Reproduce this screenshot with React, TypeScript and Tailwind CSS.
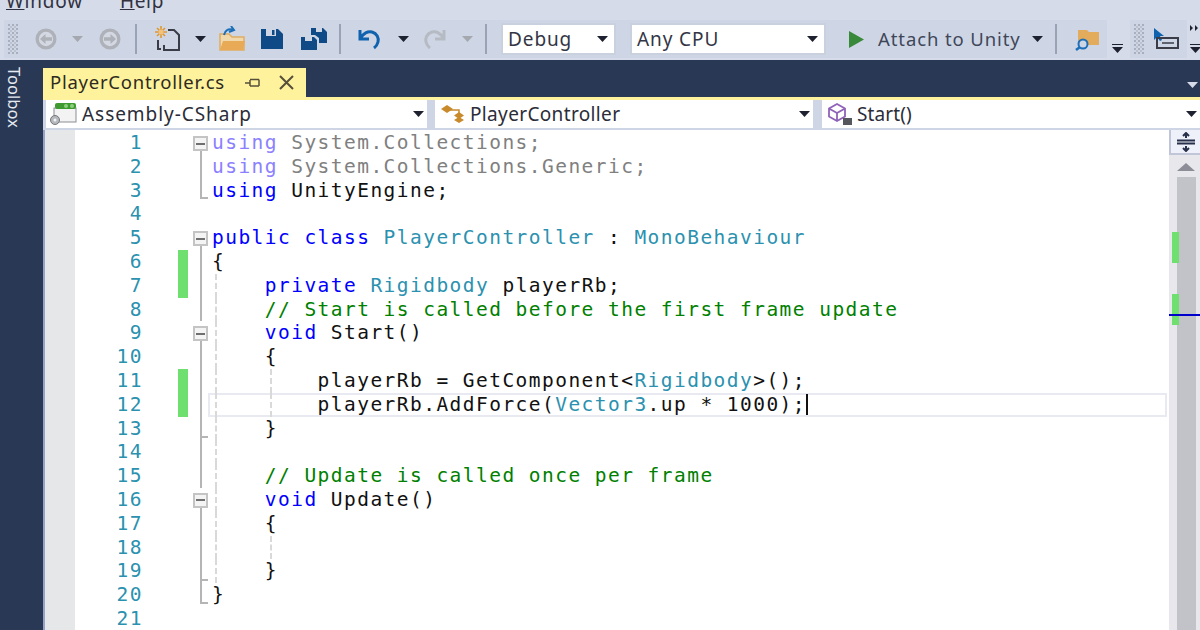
import type { ReactNode } from "react";

type Fold = "open" | "line" | "tick" | "end" | "none";
type Part = [string, string];

const KW = "text-[#0000ff]";
const DIM_KW = "text-[#8b80ff]";
const DIM = "text-[#808080]";
const TY = "text-[#2b91af]";
const CM = "text-[#008000]";
const TX = "text-[#111111]";

const rows: { code: Part[]; fold: Fold; changed?: boolean; guides?: number[] }[] = [
  { fold: "open", code: [[DIM_KW, "using"], [DIM, " System.Collections;"]] },
  { fold: "line", code: [[DIM_KW, "using"], [DIM, " System.Collections.Generic;"]] },
  { fold: "end", code: [[KW, "using"], [TX, " UnityEngine;"]] },
  { fold: "none", code: [] },
  { fold: "open", code: [[KW, "public class "], [TY, "PlayerController"], [TX, " : "], [TY, "MonoBehaviour"]] },
  { fold: "line", changed: true, code: [[TX, "{"]] },
  { fold: "line", changed: true, guides: [0], code: [[TX, "    "], [KW, "private "], [TY, "Rigidbody"], [TX, " playerRb;"]] },
  { fold: "line", guides: [0], code: [[CM, "    // Start is called before the first frame update"]] },
  { fold: "open", guides: [0], code: [[TX, "    "], [KW, "void "], [TX, "Start()"]] },
  { fold: "line", guides: [0], code: [[TX, "    {"]] },
  { fold: "line", changed: true, guides: [0, 1], code: [[TX, "        playerRb = GetComponent<"], [TY, "Rigidbody"], [TX, ">();"]] },
  { fold: "line", changed: true, guides: [0, 1], code: [[TX, "        playerRb.AddForce("], [TY, "Vector3"], [TX, ".up * 1000);"]] },
  { fold: "tick", guides: [0], code: [[TX, "    }"]] },
  { fold: "line", guides: [0], code: [] },
  { fold: "line", guides: [0], code: [[CM, "    // Update is called once per frame"]] },
  { fold: "open", guides: [0], code: [[TX, "    "], [KW, "void "], [TX, "Update()"]] },
  { fold: "line", guides: [0], code: [[TX, "    {"]] },
  { fold: "line", guides: [0, 1], code: [] },
  { fold: "tick", guides: [0], code: [[TX, "    }"]] },
  { fold: "end", code: [[TX, "}"]] },
  { fold: "none", code: [] },
];

function Caret({ className = "" }: { className?: string }) {
  return (
    <svg width="11" height="6" viewBox="0 0 11 6" className={`shrink-0 ${className}`}>
      <path d="M0 0h11L5.5 6z" fill="currentColor" />
    </svg>
  );
}

function Sep({ className = "" }: { className?: string }) {
  return <div className={`h-[30px] w-[2px] shrink-0 bg-[#9aa3b4] ${className}`} />;
}

function Grip({ id }: { id: string }) {
  return (
    <svg width="10" height="30" viewBox="0 0 10 30" className="shrink-0">
      <defs>
        <pattern id={id} width="4" height="4" patternUnits="userSpaceOnUse">
          <rect width="2" height="2" fill="#a9afbc" />
          <rect x="2" y="2" width="2" height="2" fill="#bcc2cd" />
        </pattern>
      </defs>
      <rect width="10" height="30" fill={`url(#${id})`} />
    </svg>
  );
}

function Nav({ dir, className = "" }: { dir: "l" | "r"; className?: string }) {
  return (
    <svg width="22" height="22" viewBox="0 0 22 22" className={`shrink-0 ${className}`}>
      <circle cx="11" cy="11" r="10.500" fill="#aeb1b8" />
      <circle cx="11" cy="11" r="7.200" fill="#d3d8e3" />
      {dir === "l" ? (
        <path d="M5 11l5.500-5v3.200H17v3.600h-6.500V16z" fill="#aeb1b8" />
      ) : (
        <path d="M17 11l-5.500-5v3.200H5v3.600h6.500V16z" fill="#aeb1b8" />
      )}
    </svg>
  );
}

function Combo({ label, className }: { label: string; className: string }) {
  return (
    <div className={`flex h-[32px] shrink-0 items-center justify-between border-2 border-[#c9d0de] bg-white pl-[5px] pr-[6px] ${className}`}>
      <span className="text-[19px] tracking-[0.9px] text-[#333645]">{label}</span>
      <Caret className="text-[#1e2230]" />
    </div>
  );
}

function NavCombo({ icon, label, className, textClass }: { icon: ReactNode; label: string; className: string; textClass: string }) {
  return (
    <div className={`flex h-[28px] shrink-0 items-center bg-white ${className}`}>
      <div className="flex w-[35px] shrink-0 justify-center">{icon}</div>
      <span className={`flex-1 text-[19px] leading-none text-[#2b2d38] ${textClass}`}>{label}</span>
      <Caret className="mr-[3px] text-[#1e2230]" />
    </div>
  );
}

function FoldCell({ fold }: { fold: Fold }) {
  if (fold === "none") return <div className="w-[16px] shrink-0" />;
  const lineClass = fold === "end" ? "bottom-[3px] top-0" : fold === "open" ? "bottom-0 top-[6px]" : "bottom-0 top-0";
  return (
    <div className="relative h-full w-[16px] shrink-0">
      <div className={`absolute left-[8px] w-[2px] bg-[#b5b5b5] ${lineClass}`} />
      {fold === "end" && <div className="absolute bottom-[3px] left-[8px] h-[2px] w-[8px] bg-[#b5b5b5]" />}
      {fold === "tick" && <div className="absolute bottom-[2px] left-[8px] h-[2px] w-[8px] bg-[#b5b5b5]" />}
      {fold === "open" && (
        <div className="absolute left-[1px] top-[5px] flex h-[15px] w-[15px] items-center justify-center border-2 border-[#c4c4c4] bg-[#f4f4f4]">
          <div className="h-[2px] w-[9px] bg-[#6f6f6f]" />
        </div>
      )}
    </div>
  );
}

function CodeRow({ n, row }: { n: number; row: (typeof rows)[number] }) {
  return (
    <div className="relative flex h-[23.8px] items-stretch">
      {n === 12 && <div className="absolute bottom-0 left-[133px] right-[2px] top-0 border-2 border-[#e9e9f2]" />}
      <div className="w-[68px] shrink-0 text-right text-[#2b91af]">{n}</div>
      <div className="ml-[35px] w-[10px] shrink-0">
        {row.changed && <div className="h-full w-full bg-[#6fe06f]" />}
      </div>
      <div className="ml-[4px]">
        <FoldCell fold={row.fold} />
      </div>
      <div className="relative ml-[4px] whitespace-pre">
        {row.code.map(([cls, text], i) => (
          <span key={i} className={cls}>
            {text}
          </span>
        ))}
        {n === 12 && <div className="absolute -right-[2px] top-[1px] h-[21px] w-[2px] bg-[#111111]" />}
      </div>
      {row.guides?.includes(0) && (
        <div className="absolute bottom-0 left-[140px] top-0 border-l-2 border-dashed border-[#d9d9d9]" />
      )}
      {row.guides?.includes(1) && (
        <div className="absolute bottom-0 left-[195px] top-0 border-l-2 border-dashed border-[#d9d9d9]" />
      )}
    </div>
  );
}

export default function App() {
  return (
    <div className="flex h-[630px] w-[1200px] flex-col overflow-hidden bg-[#d6dbe9] font-['Noto_Sans',sans-serif]">
      {/* menu strip, cropped at the top of the shot */}
      <div className="flex h-[20px] shrink-0 items-end overflow-hidden pl-[6px] text-[19px] leading-[28px] text-[#303240]">
        <span className="mb-[5px] tracking-[0.8px]"><span className="underline">W</span>indow</span>
        <span className="mb-[5px] ml-[37px] tracking-[0.7px]"><span className="underline">H</span>elp</span>
      </div>

      {/* toolbars */}
      <div className="flex h-[38px] shrink-0 items-stretch overflow-hidden pl-[4px]">
        <div className="flex items-center bg-[#ced6e6] pl-[4px] pr-[6px]">
          <Grip id="gripa" />
          <Nav dir="l" className="ml-[17px]" />
          <Caret className="ml-[14.5px] text-[#a5a8ae]" />
          <Nav dir="r" className="ml-[16.5px]" />
          <Sep className="ml-[14px]" />
          <svg width="26" height="26" viewBox="0 0 26 26" className="ml-[18px] shrink-0">
            <path d="M6 0v12M0 6h12M2 2l8 8M10 2l-8 8" stroke="#e0982f" strokeWidth="1.600" />
            <circle cx="6" cy="6" r="2.500" fill="#f2c27a" />
            <path d="M13 4h6l5 5v15H9v-5" fill="none" stroke="#3a3d48" strokeWidth="2" />
            <path d="M3 14v9h3" fill="none" stroke="#3a3d48" strokeWidth="2" />
          </svg>
          <Caret className="ml-[13.5px] text-[#1e2230]" />
          <svg width="28" height="26" viewBox="0 0 28 26" className="ml-[12.5px] shrink-0">
            <path d="M2 11V8h9l3 3h12v13H2z" fill="#f1d9ae" stroke="#e0ad62" strokeWidth="1.500" />
            <path d="M2 24l3-9h22l-2 9z" fill="#e8aa57" />
            <path d="M6 9c1-5 5-7 9-5M13 0l3 4-5 2" fill="none" stroke="#1d6fb8" strokeWidth="2" />
          </svg>
          <svg width="24" height="22" viewBox="0 0 24 22" className="ml-[14px] shrink-0">
            <path d="M1 1h17l5 5v15H1z" fill="#0f4a86" />
            <rect x="6" y="1" width="10" height="7" fill="#ced6e6" />
            <rect x="12" y="2" width="2.500" height="5" fill="#0f4a86" />
          </svg>
          <svg width="28" height="24" viewBox="0 0 28 24" className="ml-[16px] shrink-0">
            <path d="M1 10h13l3 3v10H1z" fill="#0f4a86" />
            <rect x="5" y="10" width="7" height="4" fill="#ced6e6" />
            <path d="M11 1h12l4 4v11H19v-5l-4-3h-4z" fill="#0f4a86" />
            <rect x="16" y="1" width="6" height="4" fill="#ced6e6" />
          </svg>
          <Sep className="ml-[11px]" />
          <svg width="26" height="22" viewBox="0 0 26 22" className="ml-[16px] shrink-0">
            <path d="M3 2v9h9M3.500 10.500C6 5 11 3 15 4c5 1.500 7 6 6 10-.6 2.500-2 4.500-4 6" fill="none" stroke="#0f62ad" strokeWidth="3" />
          </svg>
          <Caret className="ml-[14.5px] text-[#1e2230]" />
          <svg width="26" height="22" viewBox="0 0 26 22" className="ml-[12.5px] shrink-0">
            <path d="M23 2v9h-9M22.500 10.500C20 5 15 3 11 4 6 5.500 4 10 5 14c.6 2.500 2 4.500 4 6" fill="none" stroke="#b6bac2" strokeWidth="3" />
          </svg>
          <Caret className="ml-[14.5px] text-[#a5a8ae]" />
          <Sep className="ml-[12.5px]" />
          <Combo label="Debug" className="ml-[14px] w-[115px]" />
          <Combo label="Any CPU" className="ml-[14px] w-[196px]" />
          <svg width="16" height="17" viewBox="0 0 16 17" className="ml-[22px] shrink-0">
            <path d="M1 0l15 8.500L1 17z" fill="#38893a" />
          </svg>
          <span className="ml-[14px] whitespace-nowrap text-[18.5px] tracking-[0.9px] text-[#3f4658]">Attach to Unity</span>
          <Caret className="ml-[11.5px] text-[#1e2230]" />
          <Sep className="ml-[11.5px]" />
          <svg width="26" height="24" viewBox="0 0 26 24" className="ml-[18px] shrink-0">
            <path d="M3 3h9l2 2h10v13H3z" fill="#e3ac5c" />
            <circle cx="8" cy="17" r="4.500" fill="#ced6e6" stroke="#1d6fb8" strokeWidth="2" />
            <path d="M5 20l-4 3" stroke="#1d6fb8" strokeWidth="2.500" />
          </svg>
        </div>
        <div className="ml-[5.5px] flex flex-col justify-end gap-[2px] pb-[5px]">
          <div className="h-[1px] w-[11px] bg-[#1e2230]" />
          <Caret className="text-[#1e2230]" />
        </div>
        <div className="ml-[6.5px] flex items-center bg-[#ced6e6] pl-[4px] pr-[8px]">
          <Grip id="gripb" />
          <svg width="26" height="22" viewBox="0 0 26 22" className="ml-[9px] shrink-0">
            <path d="M1 0v12l3-3 3 4 2-1-2-4h4z" fill="#0f62ad" />
            <rect x="4" y="10" width="21" height="10" fill="none" stroke="#3a3d48" strokeWidth="2" />
            <path d="M9 15h12" stroke="#3a3d48" strokeWidth="1.500" />
          </svg>
        </div>
        <div className="ml-[3px] flex flex-col justify-between pb-[5px] pt-[5px]">
          <svg width="11" height="6" viewBox="0 0 11 6" className="shrink-0">
            <path d="M0 0l3 3-3 3zM5 0l3 3-3 3z" fill="#1e2230" />
          </svg>
          <div className="flex flex-col gap-[2px]">
            <div className="h-[1px] w-[11px] bg-[#1e2230]" />
            <Caret className="text-[#1e2230]" />
          </div>
        </div>
      </div>

      <div className="h-[2px] shrink-0 bg-[#d6dbe9]" />

      {/* dark shell */}
      <div className="flex min-h-0 flex-1 bg-[#293955]">
        <div className="w-[43px] shrink-0 pt-[7px]">
          <div className="ml-[4px] text-[16.5px] leading-[20px] text-[#e6e9f0] [writing-mode:vertical-rl]">Toolbox</div>
        </div>

        <div className="flex min-w-0 flex-1 flex-col">
          <div className="flex h-[37px] shrink-0 items-end justify-between pt-[8px]">
            <div className="flex h-[29px] w-[263px] items-center bg-[#fff29d] pl-[7px] text-[#2d2a20]">
              <span className="text-[18.5px] leading-none tracking-[0.75px]">PlayerController.cs</span>
              <svg width="16" height="12" viewBox="0 0 16 12" className="ml-[20px] shrink-0">
                <path d="M0 6h5M5 3v6M5 2.500h9M5 9h9M14 2.500v6.500" fill="none" stroke="#55503a" strokeWidth="1.500" />
              </svg>
              <svg width="17" height="17" viewBox="0 0 17 17" className="ml-[17px] shrink-0">
                <path d="M2 2l13 13M15 2L2 15" stroke="#55503a" strokeWidth="2" />
              </svg>
            </div>
            <Caret className="mb-[9px] mr-[1px] w-[13px] text-[#d6dbe9]" />
          </div>
          <div className="h-[3px] shrink-0 bg-[#fff29d]" />

          {/* navigation bar */}
          <div className="flex h-[30px] shrink-0 items-start bg-[#ced6e6] pl-[3px]">
            <NavCombo
              className="w-[381px]"
              textClass="ml-[1px] tracking-[0.95px]"
              label="Assembly-CSharp"
              icon={
                <svg width="29" height="24" viewBox="0 0 29 24">
                  <rect x="5" y="6" width="22" height="14" fill="#f3f3f3" stroke="#8a8d94" />
                  <rect x="6" y="1" width="21" height="6" rx="2" fill="#3f9a32" />
                  <circle cx="17" cy="4" r="2" fill="#8fd07f" />
                  <circle cx="23" cy="4" r="2" fill="#8fd07f" />
                  <circle cx="6" cy="18" r="4.500" fill="#b5b8bd" stroke="#74777d" />
                  <circle cx="6" cy="18" r="1.500" fill="#f3f3f3" />
                </svg>
              }
            />
            <NavCombo
              className="ml-[8px] w-[378px]"
              textClass="tracking-[0.35px]"
              label="PlayerController"
              icon={
                <svg width="24" height="20" viewBox="0 0 24 20">
                  <path d="M6 1l6 4-6 4-6-4zM18 8l5 3.500-5 3.500-5-3.500zM18 13l5 3-5 3-5-3z" fill="#c98a2c" />
                  <path d="M9 6h9v4" fill="none" stroke="#c98a2c" strokeWidth="1.500" />
                </svg>
              }
            />
            <NavCombo
              className="ml-[9px] flex-1"
              textClass="tracking-[0.1px]"
              label="Start()"
              icon={
                <svg width="28" height="24" viewBox="0 0 28 24">
                  <path d="M11 2l8 4.500v8L11 19l-8-4.500v-8zM3 6.500l8 4.500 8-4.500M11 11v8" fill="none" stroke="#8f62b8" strokeWidth="1.800" />
                  <rect x="17" y="16" width="9" height="7" fill="#55575d" />
                </svg>
              }
            />
          </div>

          {/* editor */}
          <div className="flex min-h-0 flex-1 border-l-2 border-[#98a2c4]">
            <div className="w-[30px] shrink-0 bg-[#e6e7e8]" />
            <div className="min-w-0 flex-1 overflow-hidden bg-white pt-[1px] font-['DejaVu_Sans_Mono',monospace] text-[19.5px] leading-[23.8px] tracking-[1.46px]">
              {rows.map((row, i) => (
                <CodeRow key={i} n={i + 1} row={row} />
              ))}
            </div>
            {/* vertical scrollbar */}
            <div className="relative flex w-[31px] shrink-0 flex-col bg-[#e8e8ec]">
              <div className="flex h-[25px] shrink-0 items-center justify-center border-b-2 border-l-2 border-[#c0c6d8] bg-[#eef1fa]">
                <svg width="20" height="20" viewBox="0 0 20 20">
                  <path d="M1 8.500h18M1 11.500h18M10 1v5M10 14v5M7 4l3-3 3 3M7 16l3 3 3-3" fill="none" stroke="#27304a" strokeWidth="2" />
                </svg>
              </div>
              <svg width="18" height="8" viewBox="0 0 18 8" className="ml-[8px] mt-[8px] shrink-0">
                <path d="M0 8L9 0l9 8z" fill="#8c8d96" />
              </svg>
              <div className="ml-[8px] mt-[6px] w-[19px] flex-1 bg-[#c2c3c9]" />
              <div className="absolute left-[3px] top-[102px] h-[31px] w-[7px] bg-[#6fe06f]" />
              <div className="absolute left-[3px] top-[164px] h-[31px] w-[7px] bg-[#6fe06f]" />
              <div className="absolute left-0 right-0 top-[184px] h-[2px] bg-[#0000cc]" />
            </div>
          </div>
        </div>
      </div>
    </div>
  );
}
